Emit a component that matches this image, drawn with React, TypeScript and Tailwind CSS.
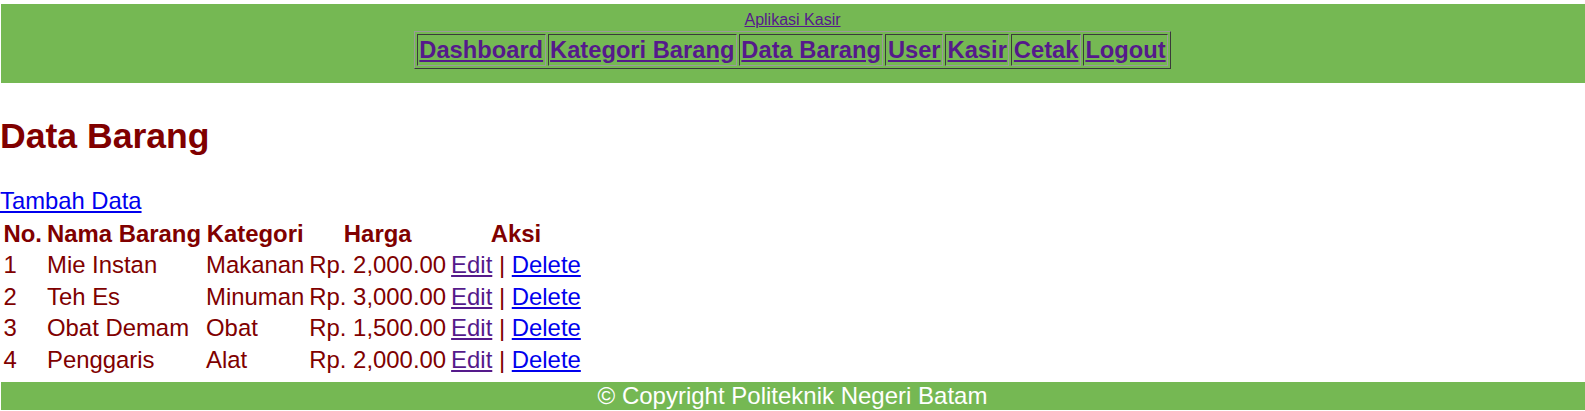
const menu = ["Dashboard", "Kategori Barang", "Data Barang", "User", "Kasir", "Cetak", "Logout"];

const barang = [
  { no: 1, nama: "Mie Instan", kategori: "Makanan", harga: "Rp. 2,000.00" },
  { no: 2, nama: "Teh Es", kategori: "Minuman", harga: "Rp. 3,000.00" },
  { no: 3, nama: "Obat Demam", kategori: "Obat", harga: "Rp. 1,500.00" },
  { no: 4, nama: "Penggaris", kategori: "Alat", harga: "Rp. 2,000.00" },
];

export default function App() {
  return (
    <div className="pt-[4px] bg-white text-[#800000]" style={{ fontFamily: '"Liberation Sans", Arial, sans-serif' }}>
      <header className="ml-[1px] h-[79px] bg-[#75b853]">
        <div className="w-[1583px] flex flex-col items-center pt-[6px]">
          <a href="#" className="text-[16px] leading-[20px] text-[#551a8b] underline">Aplikasi Kasir</a>
          <table className="mt-[1px] border-separate border-spacing-[2px] border border-t-[#9a9a9a] border-l-[#9a9a9a] border-b-[#3a3a3a] border-r-[#3a3a3a]">
            <tbody>
              <tr>
                {menu.map((m) => (
                  <td key={m} className="p-[1.5px] border border-t-[#3a3a3a] border-l-[#3a3a3a] border-b-[#9a9a9a] border-r-[#9a9a9a]">
                    <a href="#" className="block text-[23.7px] leading-[27px] font-bold text-[#551a8b] underline whitespace-nowrap">{m}</a>
                  </td>
                ))}
              </tr>
            </tbody>
          </table>
        </div>
      </header>

      <h1 className="mt-[33px] mb-[32px] text-[35.6px] leading-[40px] font-bold">Data Barang</h1>

      <a href="#" className="block w-fit text-[23.8px] leading-[26px] text-[#0000ee] underline">Tambah Data</a>

      <table className="mt-[3px] border-separate border-spacing-[2px] text-[23.9px] leading-[26.5px]">
        <thead>
          <tr>
            {["No.", "Nama Barang", "Kategori", "Harga", "Aksi"].map((h) => (
              <th key={h} className="p-[1.5px] font-bold text-center whitespace-nowrap">{h}</th>
            ))}
          </tr>
        </thead>
        <tbody>
          {barang.map((b) => (
            <tr key={b.no}>
              <td className="p-[1.5px]">{b.no}</td>
              <td className="p-[1.5px] whitespace-nowrap">{b.nama}</td>
              <td className="p-[1.5px]">{b.kategori}</td>
              <td className="p-[1.5px] whitespace-nowrap">{b.harga}</td>
              <td className="p-[1.5px] whitespace-nowrap">
                <a href="#" className="text-[#551a8b] underline">Edit</a> |{" "}
                <a href="#" className="text-[#0000ee] underline">Delete</a>
              </td>
            </tr>
          ))}
        </tbody>
      </table>

      <footer className="mt-[5px] ml-[1px] h-[28px] bg-[#75b853]">
        <div className="w-[1583px] text-center text-white text-[24px] leading-[28px]">© Copyright Politeknik Negeri Batam</div>
      </footer>
    </div>
  );
}
